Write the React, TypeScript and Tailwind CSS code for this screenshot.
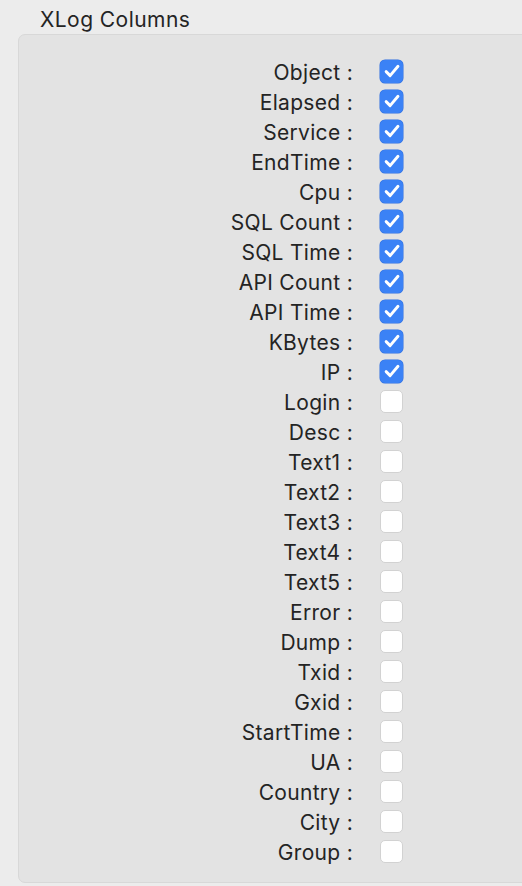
import React from 'react';

const columns: { name: string; checked: boolean }[] = [
  { name: 'Object', checked: true },
  { name: 'Elapsed', checked: true },
  { name: 'Service', checked: true },
  { name: 'EndTime', checked: true },
  { name: 'Cpu', checked: true },
  { name: 'SQL Count', checked: true },
  { name: 'SQL Time', checked: true },
  { name: 'API Count', checked: true },
  { name: 'API Time', checked: true },
  { name: 'KBytes', checked: true },
  { name: 'IP', checked: true },
  { name: 'Login', checked: false },
  { name: 'Desc', checked: false },
  { name: 'Text1', checked: false },
  { name: 'Text2', checked: false },
  { name: 'Text3', checked: false },
  { name: 'Text4', checked: false },
  { name: 'Text5', checked: false },
  { name: 'Error', checked: false },
  { name: 'Dump', checked: false },
  { name: 'Txid', checked: false },
  { name: 'Gxid', checked: false },
  { name: 'StartTime', checked: false },
  { name: 'UA', checked: false },
  { name: 'Country', checked: false },
  { name: 'City', checked: false },
  { name: 'Group', checked: false },
];

const CheckBox: React.FC<{ checked: boolean }> = ({ checked }) =>
  checked ? (
    <div className="w-[23px] h-[23px] rounded-[5px] bg-[#3b82f6] flex items-center justify-center shadow-[0_0_0_0.5px_#2f6fe0]">
      <svg width="20" height="20" viewBox="0 0 16 16" fill="none">
        <path d="M3.3 8.5 L6.5 11.7 L12.8 4.2" stroke="white" strokeWidth="2.3" strokeLinecap="round" strokeLinejoin="round" />
      </svg>
    </div>
  ) : (
    <div className="w-[23px] h-[23px] rounded-[5px] bg-white border border-[#d2d2d2]" />
  );

export default function App() {
  return (
    <div
      className="w-[522px] h-[886px] overflow-hidden bg-[#ececec] text-[#242424]"
      style={{ fontFamily: 'Inter, "Liberation Sans", sans-serif' }}
    >
      <div className="pl-[40px] pt-[8px] h-[34px] text-[21px] leading-[24px] tracking-[0.45px]">XLog Columns</div>
      <div className="ml-[18px] w-[530px] h-[849px] rounded-[7px] bg-[#e3e3e3] border border-[#d8d8d8] pt-[21px]">
        {columns.map((c) => (
          <div key={c.name} className="flex items-center h-[30px]">
            <div className="w-[335px] text-right text-[21px] pt-[3px] leading-[27px] tracking-[0.3px] pr-px">
              {c.name} :
            </div>
            <div className="ml-[26px]">
              <CheckBox checked={c.checked} />
            </div>
          </div>
        ))}
      </div>
    </div>
  );
}
